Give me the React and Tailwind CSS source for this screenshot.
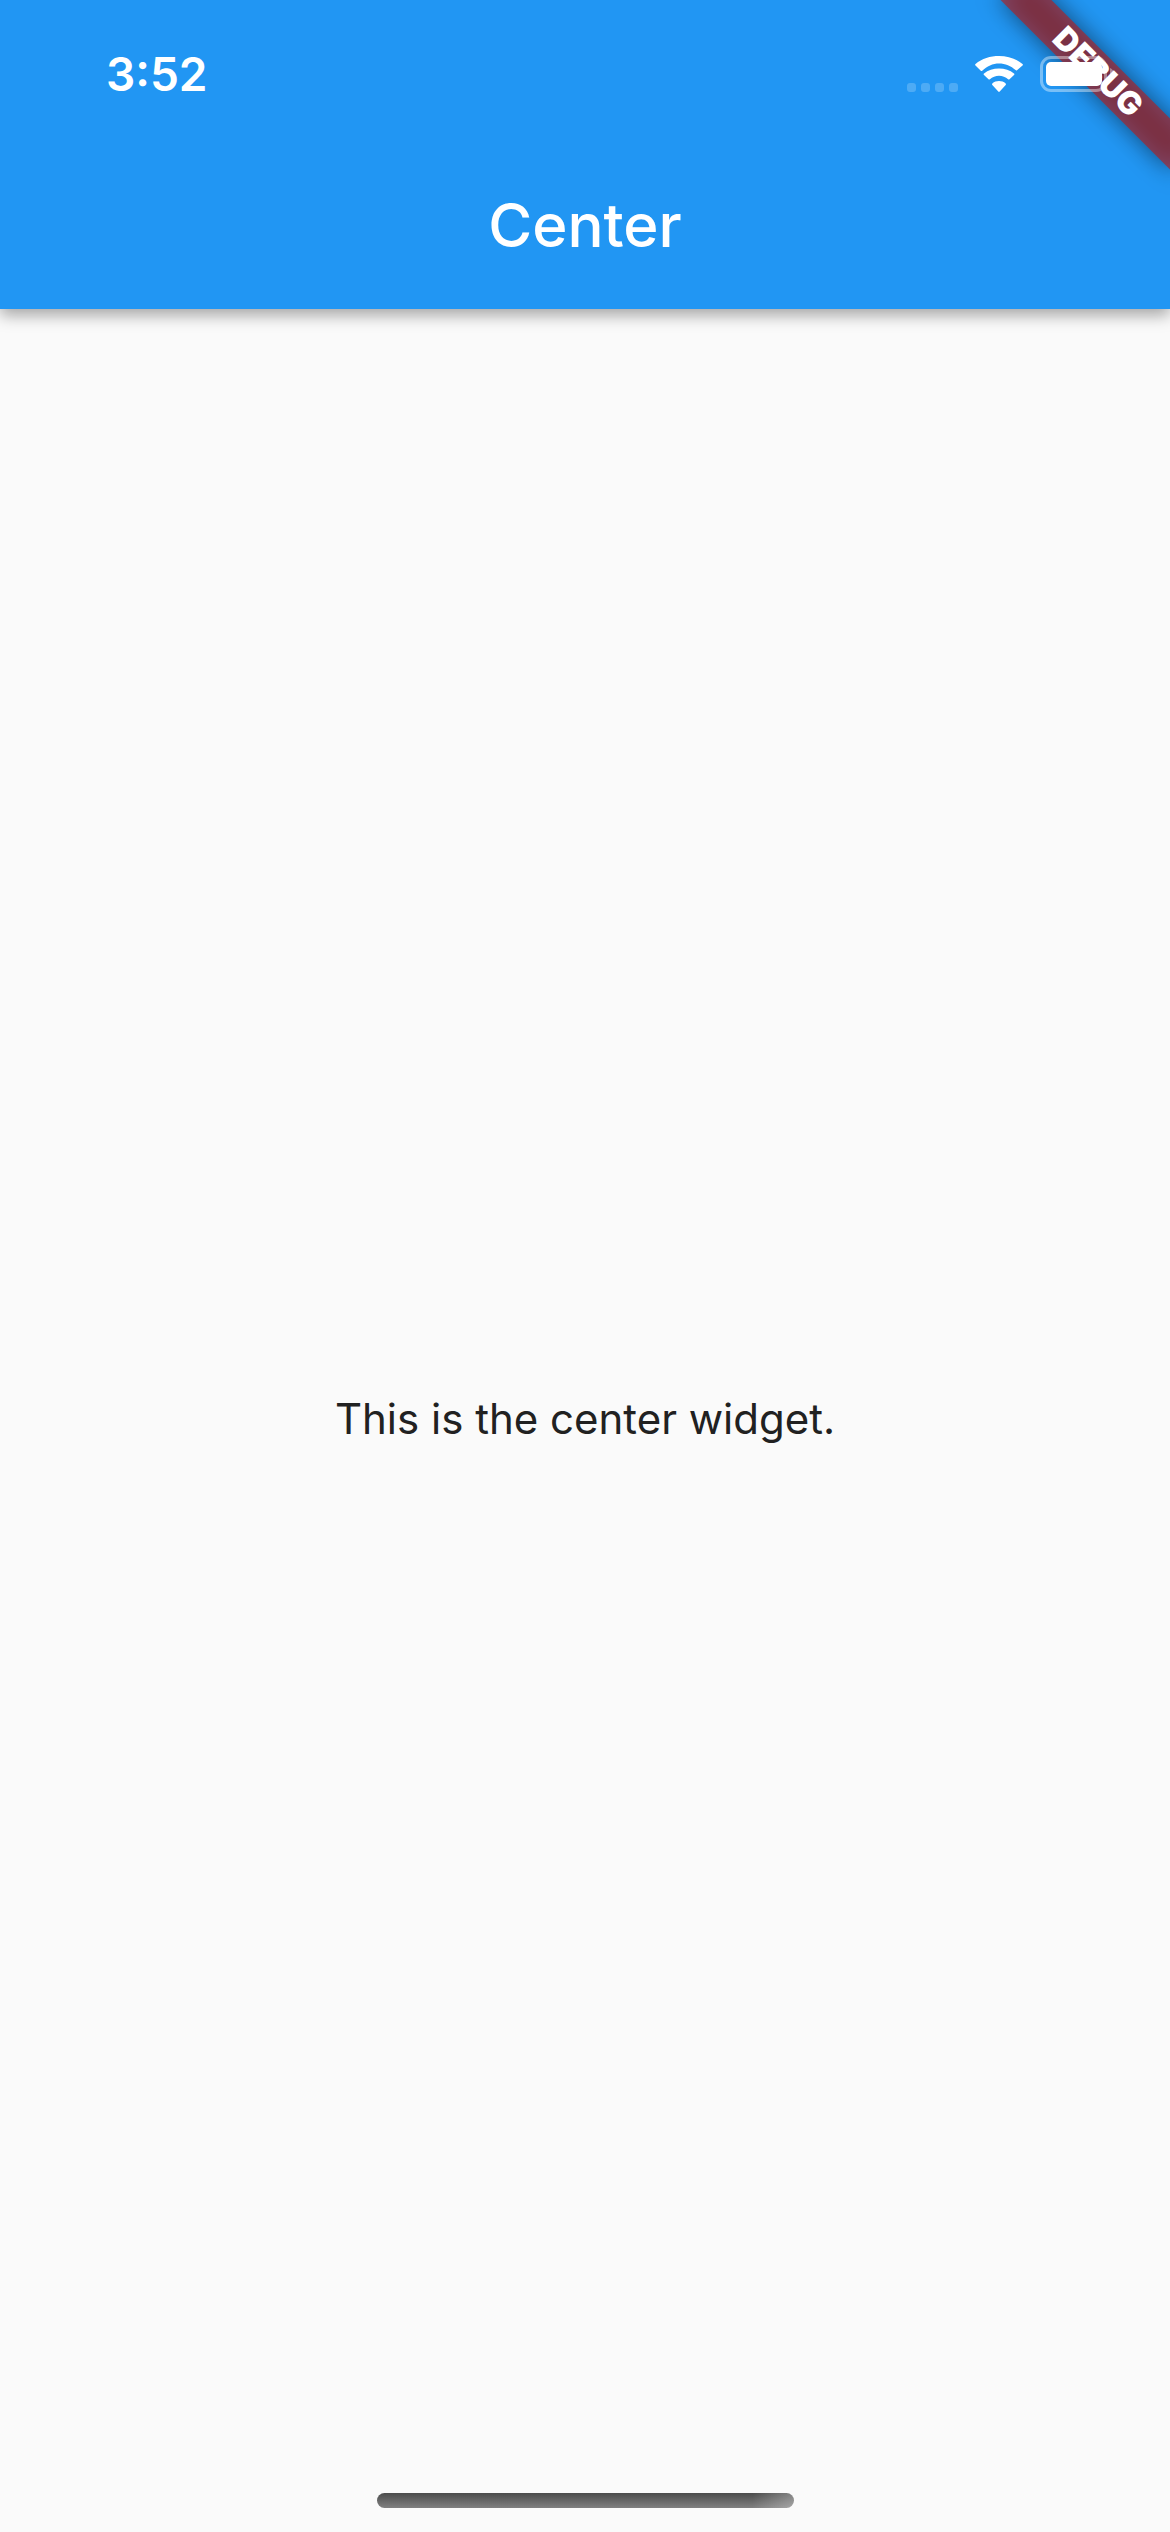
function SignalDots() {
  return (
    <div className="flex gap-[5px]" aria-label="No signal">
      {[0, 1, 2, 3].map((dot) => (
        <span key={dot} className="size-[9px] rounded-[3px] bg-white/20" />
      ))}
    </div>
  );
}

function WifiIcon() {
  return (
    <svg className="h-9 w-12" viewBox="0 0 48 36" fill="white" aria-label="Wi-Fi">
      <path d="M24 7.4c6.2 0 12.1 2.4 16.6 6.7c.4.4.9.6 1.4.1l5.500-4.700c.5-.4.5-1.100 0-1.500C41 2.500 32.700 0 24 0S7 2.500.5 8c-.5.4-.5 1.100 0 1.500l5.300 5.200c.4.4 1 .4 1.400 0C11.900 10 17.800 7.400 24 7.400z" />
      <path d="M24 19.800c3.400 0 6.600 1.300 9.100 3.500c.4.4 1 .4 1.400 0l4.500-4.300c.5-.4.5-1.100 0-1.500C35 14.100 29.700 12.500 24 12.500s-11 1.600-15 5c-.5.4-.5 1.100 0 1.500l4.500 4.300c.4.4 1 .4 1.400 0c2.500-2.200 5.700-3.500 9.100-3.500z" />
      <path d="M30.700 28.900c.4-.4.4-1.100 0-1.500C28.800 25.700 26.500 25 24 25s-4.800.7-6.700 2.400c-.4.4-.4 1.100 0 1.500l6 6.700c.4.4 1 .4 1.400 0z" />
    </svg>
  );
}

function BatteryIcon() {
  return (
    <svg className="h-9 w-[74px]" viewBox="0 0 74 36" aria-label="Battery full">
      <rect x="1.5" y="1.5" width="64" height="33" rx="9.5" fill="none" stroke="white" strokeOpacity="0.4" strokeWidth="3" />
      <rect x="6" y="6" width="56" height="24" rx="5" fill="white" />
      <path d="M70 12c2.600 1.200 4 3.500 4 6s-1.400 4.800-4 6z" fill="white" fillOpacity="0.4" />
    </svg>
  );
}

function DebugBanner() {
  return (
    <div className="pointer-events-none absolute top-0 right-0 flex size-36 items-center justify-center">
      <div className="relative h-9 w-60 shrink-0 rotate-45">
        <div className="absolute inset-0 bg-black/50 blur-[12px]" />
        <div className="relative flex h-full items-center justify-center bg-[#b71c1c]/63 text-[32px] leading-9 font-black text-white">
          DEBUG
        </div>
      </div>
    </div>
  );
}

export default function App() {
  return (
    <div className="relative flex min-h-screen flex-col overflow-hidden bg-[#fafafa] font-['Inter',sans-serif]">
      <header className="bg-[#2196f3] text-white shadow-[0_6px_15px_rgba(0,0,0,0.35)]">
        <DebugBanner />
        <div className="relative flex h-[141px] items-start justify-between pr-14 pl-[106px]">
          <time className="mt-[50px] text-[46px] leading-[48px] font-semibold">3:52</time>
          <div className="mt-14 flex items-end gap-[17px]">
            <SignalDots />
            <WifiIcon />
            <BatteryIcon />
          </div>
        </div>
        <div className="flex h-42 items-center justify-center">
          <h1 className="text-[60px] leading-[72px] font-medium">Center</h1>
        </div>
      </header>
      <main className="flex flex-1 items-center justify-center pb-1">
        <p className="text-[42px] leading-[50px] text-[#212121]">This is the center widget.</p>
      </main>
      <div className="absolute inset-x-0 bottom-6 flex justify-center">
        <div className="h-[15px] w-[417px] rounded-full bg-[linear-gradient(to_right,transparent_90%,rgba(255,255,255,0.3)),linear-gradient(to_bottom,#4c4c4c,#808080)]" />
      </div>
    </div>
  );
}
